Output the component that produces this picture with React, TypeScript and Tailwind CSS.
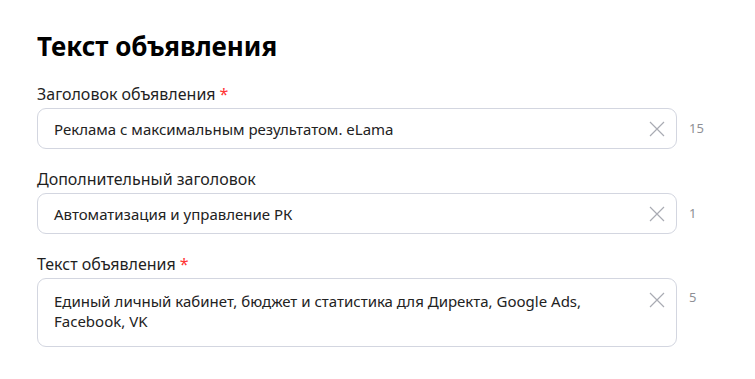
import React from 'react';

const font = { fontFamily: '"Noto Sans", Arial, sans-serif' };

function ClearIcon() {
  return (
    <svg viewBox="0 0 16 16" className="w-4 h-4 text-[#a9abb3]" fill="none" stroke="currentColor" strokeWidth="1.2">
      <path d="M1 1L15 15M15 1L1 15" />
    </svg>
  );
}

function Field({ label, required, value, count, multiline }: { label: string; required?: boolean; value: string; count: number; multiline?: boolean }) {
  return (
    <div className="flex flex-col">
      <div className="text-[16px] leading-5 text-[#1f1f1f] mb-1">
        {label}
        {required && <span className="text-[#f33] ml-1">*</span>}
      </div>
      <div className="flex items-start">
        <div
          className={
            'w-[640px] flex border border-[#d3d6e0] rounded-[9px] pl-4 pr-[11px] ' +
            (multiline ? 'h-[69px] pt-[12px] items-start' : 'h-[41px] items-center')
          }
        >
          <div className="flex-1 text-[15px] leading-5 text-[#222]">{value}</div>
          <div className={multiline ? 'pt-[1px]' : ''}>
            <ClearIcon />
          </div>
        </div>
        <div className={'pl-[12px] text-[13px] text-[#8e8f95] ' + (multiline ? 'pt-[10px]' : 'pt-[11px]')}>{count}</div>
      </div>
    </div>
  );
}

export default function App() {
  return (
    <div className="w-[755px] h-[379px] bg-white pl-[37px] pt-[30px]" style={font}>
      <h1 className="text-[26px] leading-8 font-bold text-black mb-[22px]">Текст объявления</h1>
      <div className="flex flex-col gap-5">
        <Field label="Заголовок объявления" required value="Реклама с максимальным результатом. eLama" count={15} />
        <Field label="Дополнительный заголовок" value="Автоматизация и управление РК" count={1} />
        <Field
          label="Текст объявления"
          required
          multiline
          value="Единый личный кабинет, бюджет и статистика для Директа, Google Ads, Facebook, VK"
          count={5}
        />
      </div>
    </div>
  );
}
